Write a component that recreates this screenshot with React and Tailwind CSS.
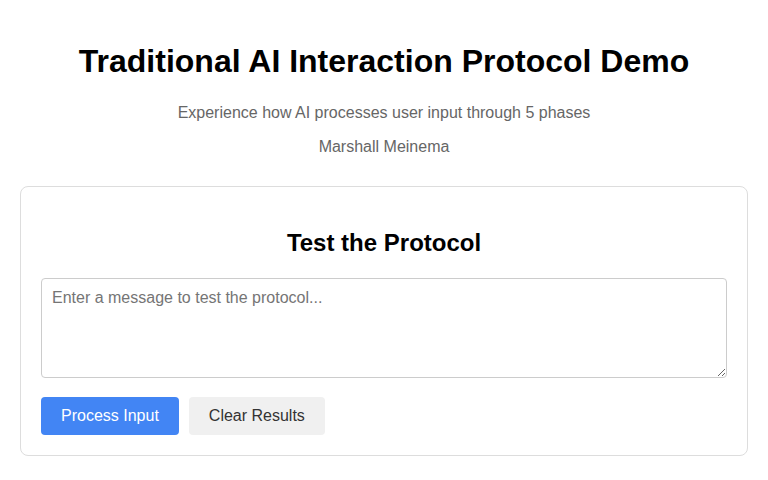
export default function App() {
  return (
    <div className="min-h-screen bg-white px-5 font-['Liberation_Sans',Arial,sans-serif] text-black">
      <h1 className="pt-[43px] text-center text-[32px] font-bold leading-[37px]">
        Traditional AI Interaction Protocol Demo
      </h1>
      <p className="mt-[24px] text-center text-base leading-[18px] text-[#666]">
        Experience how AI processes user input through 5 phases
      </p>
      <p className="mt-[16px] text-center text-base leading-[18px] text-[#666]">Marshall Meinema</p>

      <div className="mt-[30px] rounded-lg border border-[#ddd] p-5">
        <h2 className="mt-[22px] mb-[21px] text-center text-2xl font-bold leading-[28px]">Test the Protocol</h2>
        <textarea
          className="block h-[100px] w-full rounded border border-[#ccc] p-[10px] text-base leading-[18px] placeholder:text-[#757575] focus:outline-none"
          placeholder="Enter a message to test the protocol..."
        />
        <div className="mt-[19px] flex gap-[10px]">
          <button className="h-[38px] rounded bg-[#4285f4] px-5 text-base text-white">Process Input</button>
          <button className="h-[38px] rounded bg-[#f0f0f0] px-5 text-base text-[#333]">Clear Results</button>
        </div>
      </div>
    </div>
  );
}
